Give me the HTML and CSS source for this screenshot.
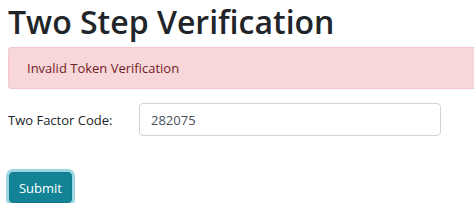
FILE: index.html
```html
<!DOCTYPE html>
<html>
<head>
<meta charset="utf-8">
<link rel="stylesheet" href="styles.css">
</head>
<body>
<div class="page">
  <h1 class="title">Two Step Verification</h1>
  <div class="alert">Invalid Token Verification</div>
  <form class="form">
    <div class="row">
      <label class="label">Two Factor Code:</label>
      <input class="input" type="text" value="282075">
    </div>
    <button class="btn" type="button">Submit</button>
  </form>
</div>
</body>
</html>
```
FILE: styles.css
```css
* { box-sizing: border-box; }
html, body { margin: 0; padding: 0; background: #fff; }
body { font-family: "Open Sans", "Noto Sans", sans-serif; color: #212529; }
.page { padding: 0 0 0 8px; }
.title {
  margin: 0;
  font-size: 32px;
  font-weight: 600;
  line-height: 44px;
  color: #212529;
  white-space: nowrap;
}
.alert {
  margin-top: 3px;
  height: 42px;
  padding: 0 18px;
  display: flex;
  align-items: center;
  background: #f8d7da;
  border: 1px solid #f5c6cb;
  border-right: none;
  border-radius: 4px 0 0 4px;
  color: #721c24;
  font-size: 13px;
}
.form { margin: 0; }
.row {
  display: flex;
  align-items: center;
  margin-top: 14px;
}
.label {
  width: 131px;
  font-size: 13px;
  color: #212529;
}
.input {
  width: 302px;
  height: 33px;
  padding: 0 11px;
  border: 1px solid #ced4da;
  border-radius: 4px;
  font-family: inherit;
  font-size: 13px;
  color: #495057;
  outline: none;
}
.btn {
  margin-top: 36px;
  margin-left: 1px;
  width: 63px;
  height: 31px;
  padding: 0;
  background: #138496;
  border: 1px solid #117a8b;
  border-radius: 4px;
  box-shadow: 0 0 0 3px rgba(58,176,195,.5);
  color: #fff;
  font-family: inherit;
  font-size: 13px;
}
```
